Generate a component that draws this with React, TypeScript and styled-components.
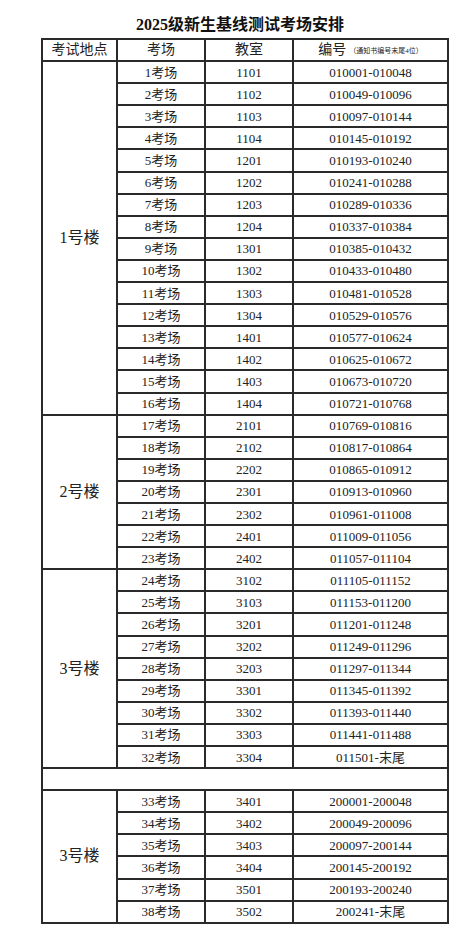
import React from 'react';
import styled, { createGlobalStyle } from 'styled-components';

const GlobalStyle = createGlobalStyle`
  body {
    margin: 0;
    background: #fff;
    color: #1e1e1e;
    font-family: "Liberation Serif", "Noto Sans CJK SC", serif;
  }
`;

const Page = styled.div`
  width: 474px;
  padding-top: 14px;
`;

const Title = styled.h1`
  width: 398px;
  margin: 0 0 0 41px;
  height: 24px;
  line-height: 22px;
  font-size: 16px;
  font-weight: bold;
  text-align: center;
  color: #111;
`;

const Table = styled.table`
  margin-left: 41px;
  width: 398px;
  border-collapse: collapse;
  border: 2px solid #222;
  table-layout: fixed;
`;

const Row = styled.tr`
  height: 22.1px;
`;

const HeadCell = styled.th<{ $w: number }>`
  width: ${(p) => p.$w}px;
  border: 2px solid #2a2a2a;
  padding: 0;
  font-size: 14px;
  font-weight: normal;
  line-height: 18px;
  text-align: center;
  color: #222;
`;

const Note = styled.span`
  font-size: 7px;
  margin-left: 3px;
  vertical-align: 1px;
`;

const Cell = styled.td`
  border: 2px solid #2a2a2a;
  padding: 0;
  font-size: 13px;
  line-height: 17px;
  text-align: center;
  color: #222;
  white-space: nowrap;
`;

const Building = styled.td`
  border: 2px solid #2a2a2a;
  padding: 0 0 4px 0;
  font-size: 16px;
  text-align: center;
  vertical-align: middle;
  color: #222;
`;

const Spacer = styled.td`
  border: 2px solid #2a2a2a;
  padding: 0;
`;

interface Room {
  no: number;
  room: string;
  code: string;
}

interface Group {
  name: string;
  rooms: Room[];
}

const pad = (n: number) => String(n).padStart(6, '0');

const makeRooms = (from: number, rooms: string[], base: number, lastStart?: number): Room[] =>
  rooms.map((room, i) => {
    const start = base + 48 * i;
    const isLast = i === rooms.length - 1 && lastStart !== undefined;
    return {
      no: from + i,
      room,
      code: isLast ? `${pad(lastStart as number)}-末尾` : `${pad(start)}-${pad(start + 47)}`,
    };
  });

const first: Group[] = [
  {
    name: '1号楼',
    rooms: makeRooms(1, ['1101', '1102', '1103', '1104', '1201', '1202', '1203', '1204',
      '1301', '1302', '1303', '1304', '1401', '1402', '1403', '1404'], 10001),
  },
  {
    name: '2号楼',
    rooms: makeRooms(17, ['2101', '2102', '2202', '2301', '2302', '2401', '2402'], 10001 + 48 * 16),
  },
  {
    name: '3号楼',
    rooms: makeRooms(24, ['3102', '3103', '3201', '3202', '3203', '3301', '3302', '3303', '3304'],
      10001 + 48 * 23, 11501),
  },
];

const second: Group[] = [
  {
    name: '3号楼',
    rooms: makeRooms(33, ['3401', '3402', '3403', '3404', '3501', '3502'], 200001, 200241),
  },
];

const renderGroup = (g: Group) =>
  g.rooms.map((r, i) => (
    <Row key={`${g.name}-${r.no}`}>
      {i === 0 && <Building rowSpan={g.rooms.length}>{g.name}</Building>}
      <Cell>{`${r.no}考场`}</Cell>
      <Cell>{r.room}</Cell>
      <Cell>{r.code}</Cell>
    </Row>
  ));

export default function App() {
  return (
    <Page>
      <GlobalStyle />
      <Title>2025级新生基线测试考场安排</Title>
      <Table>
        <thead>
          <Row>
            <HeadCell $w={73}>考试地点</HeadCell>
            <HeadCell $w={86}>考场</HeadCell>
            <HeadCell $w={86}>教室</HeadCell>
            <HeadCell $w={153}>
              编号<Note>（通知书编号末尾4位）</Note>
            </HeadCell>
          </Row>
        </thead>
        <tbody>
          {first.map(renderGroup)}
          <Row>
            <Spacer colSpan={4} />
          </Row>
          {second.map(renderGroup)}
        </tbody>
      </Table>
    </Page>
  );
}
